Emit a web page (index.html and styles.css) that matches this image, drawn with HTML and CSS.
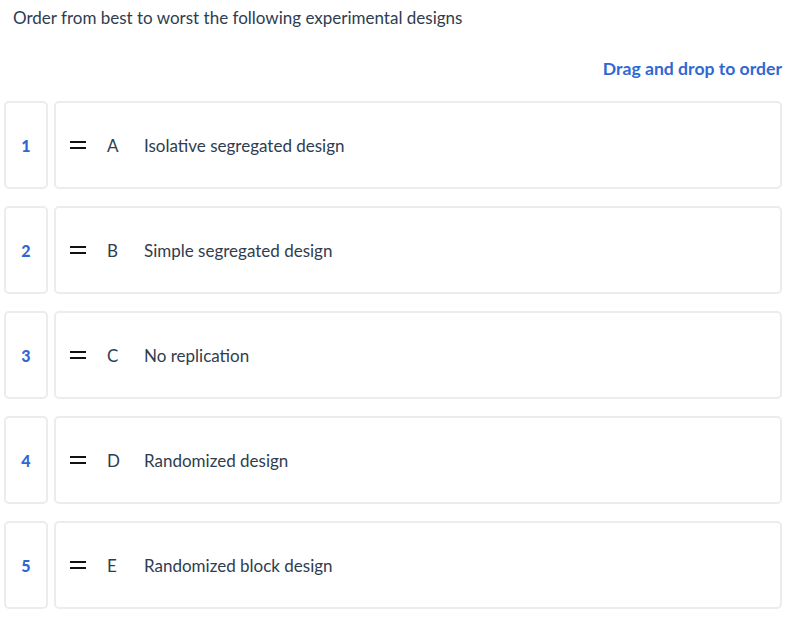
FILE: index.html
```html
<!DOCTYPE html>
<html>
<head>
<meta charset="utf-8">
<link rel="stylesheet" href="styles.css">
</head>
<body>
<div class="page">
  <p class="question">Order from best to worst the following experimental designs</p>
  <div class="hint">Drag and drop to order</div>
  <div class="list">
    <div class="row"><div class="num">1</div><div class="item"><span class="handle"></span><span class="letter">A</span><span class="label">Isolative segregated design</span></div></div>
    <div class="row"><div class="num">2</div><div class="item"><span class="handle"></span><span class="letter">B</span><span class="label">Simple segregated design</span></div></div>
    <div class="row"><div class="num">3</div><div class="item"><span class="handle"></span><span class="letter">C</span><span class="label">No replication</span></div></div>
    <div class="row"><div class="num">4</div><div class="item"><span class="handle"></span><span class="letter">D</span><span class="label">Randomized design</span></div></div>
    <div class="row"><div class="num">5</div><div class="item"><span class="handle"></span><span class="letter">E</span><span class="label">Randomized block design</span></div></div>
  </div>
</div>
</body>
</html>
```
FILE: styles.css
```css
html, body {
  margin: 0;
  padding: 0;
  background: #ffffff;
}
.page {
  font-family: Lato, "Noto Sans", sans-serif;
  color: #2e3d4f;
  padding: 0 10px 0 4px;
}
.question {
  margin: 0;
  padding: 8px 0 0 9px;
  font-size: 17px;
  line-height: 20px;
}
.hint {
  margin-top: 31px;
  text-align: right;
  font-weight: bold;
  color: #3068d3;
  font-size: 17.6px;
  line-height: 20px;
}
.list {
  margin-top: 22px;
  display: flex;
  flex-direction: column;
  gap: 17px;
}
.row {
  display: flex;
  gap: 6px;
  height: 88px;
}
.num {
  width: 44px;
  box-sizing: border-box;
  border: 2px solid #ececec;
  border-radius: 5px;
  display: flex;
  align-items: center;
  justify-content: center;
  color: #3068d3;
  font-weight: 900;
  font-size: 16px;
}
.item {
  flex: 1;
  box-sizing: border-box;
  border: 2px solid #ececec;
  border-radius: 5px;
  display: flex;
  align-items: center;
  padding-left: 14px;
  font-size: 17px;
}
.handle {
  width: 16px;
  height: 8px;
  box-sizing: border-box;
  border-top: 2.5px solid #111;
  border-bottom: 2.5px solid #111;
}
.letter {
  margin-left: 21px;
  width: 37px;
}
```
